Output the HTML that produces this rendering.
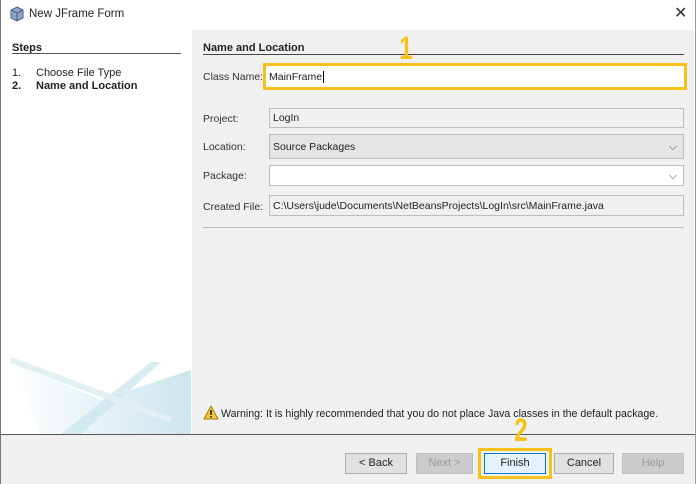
<!DOCTYPE html>
<html><head><style>
*{margin:0;padding:0;box-sizing:border-box}
body{width:696px;height:484px;overflow:hidden;background:#fff;font-family:"Liberation Sans",sans-serif;font-size:11px;color:#222;position:relative}
.a{position:absolute;white-space:nowrap}
.lbl{position:absolute;left:203px;font-size:10.5px;color:#333}
.fld{position:absolute;left:269px;width:415px;border:1px solid #bcbcbc;padding-left:3px;font-size:10.5px;white-space:nowrap}
.btn{position:absolute;top:453px;height:21px;border:1px solid #adadad;background:#e1e1e1;text-align:center;line-height:19px;font-size:11px}
.num{position:absolute;color:#f6c21a;font-family:"Liberation Sans",sans-serif;font-weight:bold;font-size:32px;line-height:1;transform:scaleX(.75)}
</style></head><body>
<div class="a" style="left:0;top:0;width:1px;height:484px;background:#777"></div>
<div class="a" style="right:0;top:0;width:1px;height:484px;background:#999"></div>
<svg class="a" style="left:9px;top:6px" width="16" height="16" viewBox="0 0 16 16"><path d="M8 1L14 4V12L8 15L2 12V4Z" fill="#8fa6c8" stroke="#4a5f86"/><path d="M2 4L8 7L14 4M8 7V15" fill="none" stroke="#4a5f86"/></svg>
<div class="a" style="left:29px;top:8px;font-size:11.5px;color:#222">New JFrame Form</div>
<div class="a" style="left:674px;top:3px;font-size:16px;color:#333">✕</div>
<div class="a" style="left:192px;top:30px;width:502px;height:404px;background:#f0f0f0"></div>
<svg class="a" style="left:1px;top:340px" width="191" height="94" viewBox="0 0 191 94"><defs><linearGradient id="g" x1="0" x2="1"><stop offset="0" stop-color="#fff"/><stop offset="1" stop-color="#a9d4e2"/></linearGradient></defs><path d="M10 22L100 60L190 30V94H40Z" fill="url(#g)" opacity=".6"/><path d="M150 22L60 94H80L160 22Z" fill="#cde6ee" opacity=".8"/><path d="M10 20L170 80" stroke="#e2f0f4" stroke-width="6"/></svg>
<div class="a" style="left:12px;top:42px;font-weight:bold">Steps</div>
<div class="a" style="left:12px;top:53px;width:169px;height:1px;background:#555"></div>
<div class="a" style="left:12px;top:67px">1.</div><div class="a" style="left:36px;top:67px">Choose File Type</div>
<div class="a" style="left:12px;top:80px;font-weight:bold">2.</div><div class="a" style="left:36px;top:80px;font-weight:bold">Name and Location</div>
<div class="a" style="left:203px;top:42px;font-weight:bold">Name and Location</div>
<div class="a" style="left:203px;top:54px;width:481px;height:1px;background:#444"></div>
<div class="lbl" style="top:71px">Class Name:</div>
<div class="a" style="left:263px;top:63px;width:424px;height:27px;border:3px solid #f6c21a;background:#fff;padding:5px 0 0 3px;font-size:10.5px">MainFrame<span style="border-left:1px solid #000;margin-left:1px"></span></div>
<div class="num" style="left:397px;top:32px">1</div>
<div class="lbl" style="top:113px">Project:</div>
<div class="fld" style="top:108px;height:20px;line-height:19px;background:#f0f0f0">LogIn</div>
<div class="lbl" style="top:141px">Location:</div>
<div class="fld" style="top:134px;height:25px;line-height:24px;background:#e5e5e5">Source Packages<span style="position:absolute;right:6px;color:#555">⌵</span></div>
<div class="lbl" style="top:170px">Package:</div>
<div class="fld" style="top:165px;height:21px;line-height:20px;background:#fff"><span style="position:absolute;right:6px;color:#555">⌵</span></div>
<div class="lbl" style="top:201px">Created File:</div>
<div class="fld" style="top:195px;height:21px;line-height:20px;background:#f0f0f0">C:\Users\jude\Documents\NetBeansProjects\LogIn\src\MainFrame.java</div>
<div class="a" style="left:203px;top:227px;width:481px;height:1px;background:#bbb"></div>
<svg class="a" style="left:203px;top:405px" width="16" height="15" viewBox="0 0 16 15"><path d="M8 1L15 14H1Z" fill="#f2c937" stroke="#a07d10"/><rect x="7.2" y="5" width="1.6" height="5" fill="#222"/><rect x="7.2" y="11" width="1.6" height="1.6" fill="#222"/></svg>
<div class="a" style="left:221px;top:408px;font-size:10.6px">Warning: It is highly recommended that you do not place Java classes in the default package.</div>
<div class="a" style="left:1px;top:434px;width:694px;height:1px;background:#555"></div>
<div class="a" style="left:1px;top:435px;width:694px;height:49px;background:#f0f0f0"></div>
<div class="num" style="left:512px;top:414px">2</div>
<div class="btn" style="left:345px;width:62px">&lt; Back</div>
<div class="btn" style="left:416px;width:57px;color:#999;background:#ccc;border-color:#bfbfbf">Next &gt;</div>
<div class="a" style="left:478px;top:448px;width:74px;height:31px;border:3px solid #f6c21a"></div>
<div class="btn" style="left:484px;width:62px;border-color:#0078d7;background:#e5f1fb">Finish</div>
<div class="btn" style="left:554px;width:60px">Cancel</div>
<div class="btn" style="left:622px;width:62px;color:#999;background:#ccc;border-color:#bfbfbf">Help</div>
</body></html>
